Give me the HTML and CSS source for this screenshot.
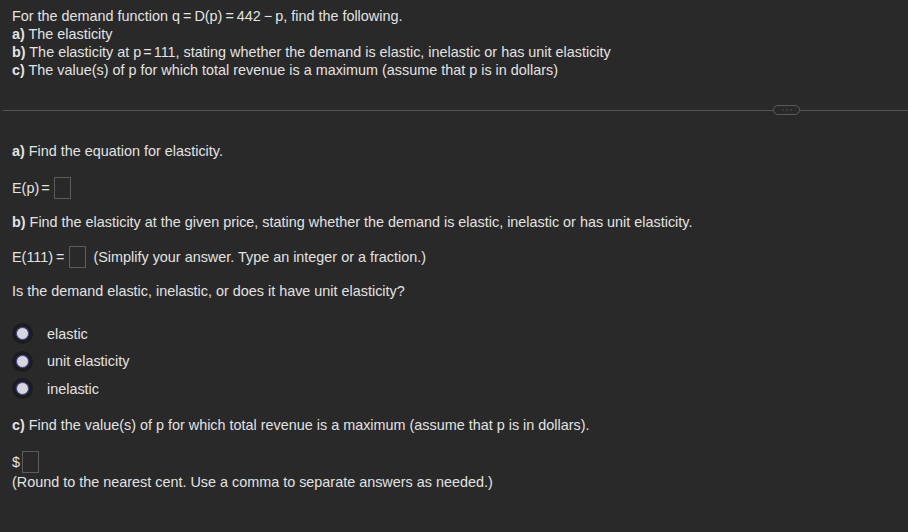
FILE: index.html
```html
<!DOCTYPE html>
<html>
<head>
<meta charset="utf-8">
<link rel="stylesheet" href="styles.css">
</head>
<body>
<div class="question">
  <div class="line">For the demand function q<span class="op wide">=</span>D(p)<span class="op wide">=</span>442<span class="op wide">−</span>p, find the following.</div>
  <div class="line"><b>a)</b> The elasticity</div>
  <div class="line"><b>b)</b> The elasticity at p<span class="op">=</span>111, stating whether the demand is elastic, inelastic or has unit elasticity</div>
  <div class="line"><b>c)</b> The value(s) of p for which total revenue is a maximum (assume that p is in dollars)</div>
</div>
<div class="divider">
  <div class="rule"></div>
  <div class="pill"><span></span><span></span><span></span></div>
  <div class="rule short"></div>
</div>
<div class="answers">
  <p class="para"><b>a)</b> Find the equation for elasticity.</p>
  <p class="para eq">E(p)<span class="op">=</span><span class="box"></span></p>
  <p class="para"><b>b)</b> Find the elasticity at the given price, stating whether the demand is elastic, inelastic or has unit elasticity.</p>
  <p class="para eq">E(111)<span class="op wide">=</span><span class="box"></span><span class="hint">(Simplify your answer. Type an integer or a fraction.)</span></p>
  <p class="para">Is the demand elastic, inelastic, or does it have unit elasticity?</p>
  <div class="options">
    <div class="opt"><span class="radio"></span><span>elastic</span></div>
    <div class="opt"><span class="radio"></span><span>unit elasticity</span></div>
    <div class="opt"><span class="radio"></span><span>inelastic</span></div>
  </div>
  <p class="para"><b>c)</b> Find the value(s) of p for which total revenue is a maximum (assume that p is in dollars).</p>
  <div class="dollar">$<span class="box"></span></div>
  <div class="line">(Round to the nearest cent. Use a comma to separate answers as needed.)</div>
</div>
</body>
</html>
```
FILE: styles.css
```css
html, body {
  margin: 0;
  padding: 0;
  background: #292929;
}
body {
  color: #e2e2e2;
  font-family: "Liberation Sans", Arial, sans-serif;
  font-size: 14.4px;
  width: 908px;
  height: 532px;
  overflow: hidden;
}
b { font-weight: bold; }
.op { margin: 0 2px; }
.op.wide { margin: 0 3px; }
.question {
  padding: 7px 0 0 12px;
}
.line {
  line-height: 18px;
}
.divider {
  display: flex;
  align-items: center;
  margin: 26px 0 0 3px;
  height: 10px;
}
.rule {
  flex: 1;
  height: 1px;
  background: #555;
}
.rule.short { flex: 0 0 108px; }
.pill {
  width: 25px;
  height: 8px;
  border: 1px solid #5a5a5a;
  border-radius: 5px;
  display: flex;
  align-items: center;
  justify-content: center;
  gap: 2px;
}
.pill span {
  width: 2px;
  height: 2px;
  background: #444;
  border-radius: 50%;
}
.answers {
  padding: 27px 0 0 12px;
}
.para {
  margin: 0;
  line-height: 18px;
}
.answers > .para:first-child { margin-bottom: 16px; }
.eq {
  display: flex;
  align-items: center;
  height: 23px;
  margin-bottom: 14px !important;
}
.box {
  display: inline-block;
  width: 15px;
  height: 20px;
  border: 1px solid #5c5c5c;
  margin-left: 2px;
}
.hint { margin-left: 7px; }
.answers > .para:nth-child(3) { margin-bottom: 14px; }
.answers > .para:nth-child(4) { margin-bottom: 13px; }
.options {
  margin-top: 20px;
  margin-bottom: 13px;
}
.opt {
  display: flex;
  align-items: center;
  height: 27.5px;
}
.radio {
  width: 21px;
  height: 21px;
  border-radius: 50%;
  background: #1c1c1c;
  display: flex;
  align-items: center;
  justify-content: center;
  margin-right: 14px;
}
.radio::after {
  content: "";
  width: 11px;
  height: 11px;
  border-radius: 50%;
  background: #d6d6dc;
  border: 1px solid #3b3b8a;
  box-shadow: 0 0 1px #5050b0;
}
.dollar {
  display: flex;
  align-items: center;
  margin-top: 17px;
  height: 23px;
}
.dollar .box { margin-left: 2px; }
.answers > .line { margin-top: -1px; }
```
